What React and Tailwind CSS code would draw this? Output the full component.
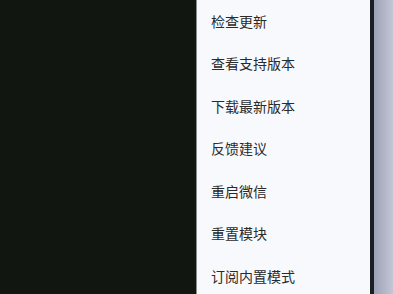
import React from 'react';

const items = ['检查更新', '查看支持版本', '下载最新版本', '反馈建议', '重启微信', '重置模块', '订阅内置模式'];

const App = () => {
  return (
    <div className="flex h-[294px] w-[393px] overflow-hidden bg-[#121611]" style={{ fontFamily: '"Noto Sans CJK SC", "Noto Sans", sans-serif' }}>
      <div className="w-[196px] shrink-0" />
      <div className="w-[174px] shrink-0 border-l border-[#8a8f8c] bg-[#f8f9fc]">
        {items.map((t) => (
          <div key={t} className="flex h-[42.5px] items-center pl-[14px] text-[14px] text-[#2a2a2a]">
            {t}
          </div>
        ))}
      </div>
      <div className="w-[4px] shrink-0 bg-[#1c1f22]" />
      <div className="flex-1 bg-gradient-to-r from-[#9ea2b6] to-[#c3c6d6]" />
    </div>
  );
};

export default App;
